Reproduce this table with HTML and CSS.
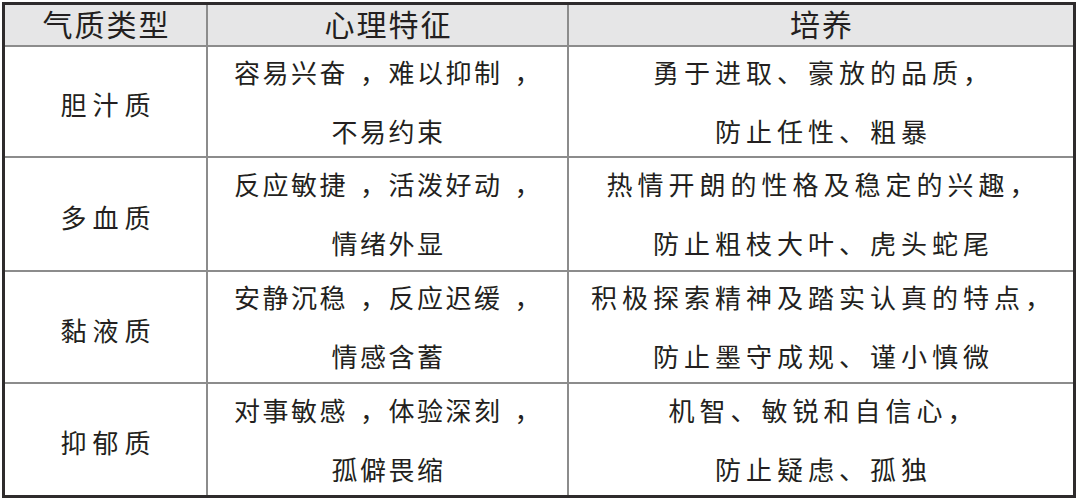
FILE: index.html
```html
<!DOCTYPE html>
<html lang="zh-CN">
<head>
<meta charset="utf-8">
<title>气质类型</title>
<link rel="stylesheet" href="styles.css">
</head>
<body>
<div class="table">
  <div class="cell head">气质类型</div>
  <div class="cell head">心理特征</div>
  <div class="cell head last">培养</div>

  <div class="cell type">胆汁质</div>
  <div class="cell body trait"><p>容易兴奋<span class="cm">，</span>难以抑制<span class="cm">，</span></p><p>不易约束</p></div>
  <div class="cell body advice last"><p>勇于进取、豪放的品质，</p><p>防止任性、粗暴</p></div>

  <div class="cell type">多血质</div>
  <div class="cell body trait"><p>反应敏捷<span class="cm">，</span>活泼好动<span class="cm">，</span></p><p>情绪外显</p></div>
  <div class="cell body advice last"><p>热情开朗的性格及稳定的兴趣，</p><p>防止粗枝大叶、虎头蛇尾</p></div>

  <div class="cell type">黏液质</div>
  <div class="cell body trait"><p>安静沉稳<span class="cm">，</span>反应迟缓<span class="cm">，</span></p><p>情感含蓄</p></div>
  <div class="cell body advice last"><p>积极探索精神及踏实认真的特点，</p><p>防止墨守成规、谨小慎微</p></div>

  <div class="cell type bottom">抑郁质</div>
  <div class="cell body trait bottom"><p>对事敏感<span class="cm">，</span>体验深刻<span class="cm">，</span></p><p>孤僻畏缩</p></div>
  <div class="cell body advice last bottom"><p>机智、敏锐和自信心，</p><p>防止疑虑、孤独</p></div>
</div>
</body>
</html>
```

FILE: styles.css
```css
html, body {
  margin: 0;
  padding: 0;
  background: #ffffff;
}

body {
  padding: 2px 0 0 2px;
  font-family: "Noto Sans CJK SC", "Noto Sans", sans-serif;
  color: #231f20;
}

.table {
  width: 1068px;
  border: 3px solid #2e2b2c;
  display: grid;
  grid-template-columns: 203px 361px 504px;
  grid-template-rows: 42px 111px 114px 112px 111px;
}

.cell {
  box-sizing: border-box;
  border-right: 2px solid #8c8c8c;
  border-bottom: 2px solid #8c8c8c;
  display: flex;
  flex-direction: column;
  align-items: center;
  justify-content: center;
  text-align: center;
}

.cell.last {
  border-right: none;
}

.cell.bottom {
  border-bottom: none;
}

.head {
  background: #e6e6e7;
  font-size: 30px;
  line-height: 40px;
  letter-spacing: 2px;
  padding-left: 2px;
  padding-bottom: 4px;
  color: #231f20;
}

.type,
.body {
  font-size: 26px;
}

.type {
  line-height: 40px;
  letter-spacing: 6px;
  padding-left: 6px;
  padding-top: 5px;
}

.body {
  padding-bottom: 2px;
}

.trait {
  letter-spacing: 2.5px;
  padding-left: 2px;
}

.advice {
  letter-spacing: 5px;
  padding-left: 5px;
}

.body p {
  margin: 0;
  line-height: 59px;
  white-space: nowrap;
}

.cm {
  margin-left: 12px;
}
```
